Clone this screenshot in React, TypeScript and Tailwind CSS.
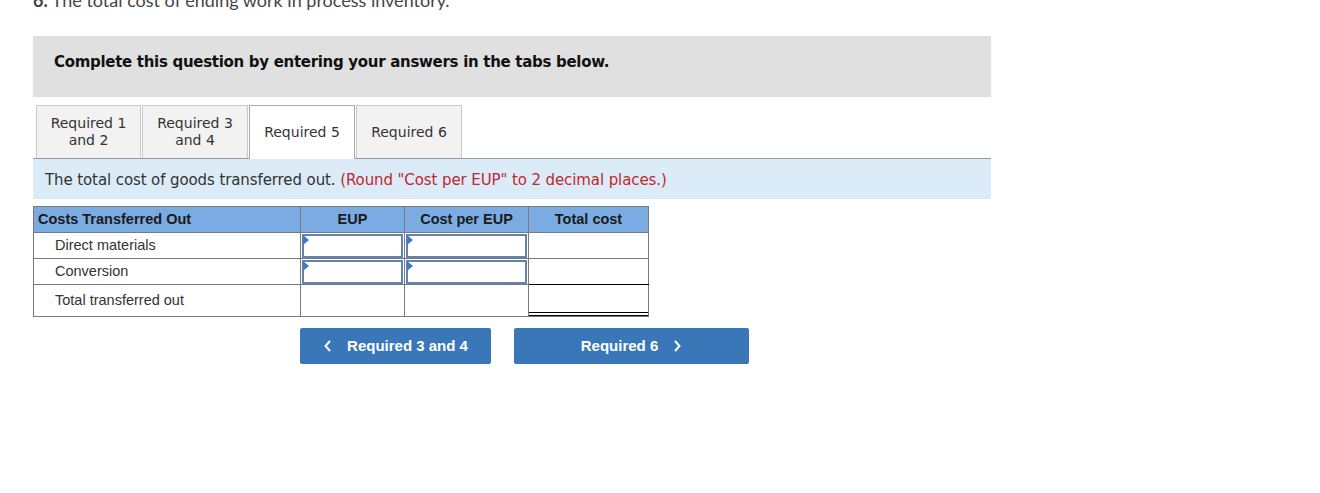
import React from "react";

const tabs = [
  { label: ["Required 1", "and 2"], active: false, w: "w-[105px]" },
  { label: ["Required 3", "and 4"], active: false, w: "w-[106px]" },
  { label: ["Required 5"], active: true, w: "w-[106px]" },
  { label: ["Required 6"], active: false, w: "w-[106px]" },
];

const InputCell = () => (
  <td className="border border-[#7a7a7a] p-0 h-[26px]">
    <div className="relative h-[24px] mx-[1px] border-2 border-[#6383aa] bg-white">
      <span className="absolute left-[-1px] top-[-1px] w-0 h-0 border-t-[5px] border-b-[5px] border-l-[6px] border-t-transparent border-b-transparent border-l-[#3b7bc8]" />
    </div>
  </td>
);

const App = () => {
  const rows = ["Direct materials", "Conversion"];

  return (
    <div className="w-[1320px] h-[493px] bg-white overflow-hidden">
      <p className="ml-[33px] -mt-[12px] text-[18px] leading-[24px] text-[#444] font-['Lato',sans-serif]">
        <span className="font-bold">6.</span> The total cost of ending work in process inventory.
      </p>

      <div className="ml-[33px] w-[958px] mt-[24px] font-['DejaVu_Sans','Verdana',sans-serif]">
        <div className="h-[61px] bg-[#e0e0e0] flex items-center pl-[21px] pb-[8px]">
          <span className="text-[15px] font-bold text-[#111] tracking-[-0.3px]">
            Complete this question by entering your answers in the tabs below.
          </span>
        </div>

        <div className="mt-[8px] flex gap-[1px] pl-[3px] border-b border-[#999] h-[54px]">
          {tabs.map((t) => (
            <div
              key={t.label.join(" ")}
              className={
                t.active
                  ? `${t.w} h-[54px] bg-white border border-b-0 border-[#a9a9a9] flex flex-col items-center justify-center text-[14px] leading-[17px] text-[#333] relative z-10`
                  : `${t.w} h-[53px] bg-[#f2f2f2] border border-b-0 border-[#c9c9c9] flex flex-col items-center justify-center text-[14px] leading-[17px] text-[#333]`
              }
            >
              {t.label.map((l) => (
                <span key={l}>{l}</span>
              ))}
            </div>
          ))}
        </div>

        <div className="h-[40px] bg-[#dbebf8] flex items-center pl-[12px] pt-[3px] text-[15px] text-[#333] tracking-[-0.1px]">
          The total cost of goods transferred out.&nbsp;
          <span className="text-[#c1272d]">(Round "Cost per EUP" to 2 decimal places.)</span>
        </div>

        <table className="mt-[7px] border-collapse font-['Liberation_Sans',Arial,sans-serif] text-[14.5px]">
          <thead>
            <tr className="bg-[#7aace3] h-[26px]">
              <th className="border border-[#7a7a7a] w-[267px] text-left pl-[4px] font-bold text-[#1a1a1a]">
                Costs Transferred Out
              </th>
              <th className="border border-[#7a7a7a] w-[104px] font-bold text-[#1a1a1a]">EUP</th>
              <th className="border border-[#7a7a7a] w-[124px] font-bold text-[#1a1a1a]">Cost per EUP</th>
              <th className="border border-[#7a7a7a] w-[120px] font-bold text-[#1a1a1a]">Total cost</th>
            </tr>
          </thead>
          <tbody>
            {rows.map((r, i) => (
              <tr key={r} className="h-[26px]">
                <td className="border border-[#7a7a7a] pl-[21px] text-[#333]">{r}</td>
                <InputCell />
                <InputCell />
                <td
                  className={
                    i === 1
                      ? "border border-[#7a7a7a] border-b-black"
                      : "border border-[#7a7a7a]"
                  }
                />
              </tr>
            ))}
            <tr className="h-[32px]">
              <td className="border border-[#7a7a7a] pl-[21px] text-[#333]">Total transferred out</td>
              <td className="border border-[#7a7a7a]" />
              <td className="border border-[#7a7a7a]" />
              <td className="border border-[#7a7a7a] border-t-black p-0 align-bottom">
                <div className="h-[4px] border-y border-black" />
              </td>
            </tr>
          </tbody>
        </table>

        <div className="mt-[11px] flex font-['Liberation_Sans',Arial,sans-serif] text-[15px] font-bold text-white">
          <button className="ml-[267px] w-[191px] h-[36px] rounded-[2px] bg-[#3a77b9] flex items-center justify-center gap-[14px]">
            <svg width="10" height="14" viewBox="0 0 10 14" fill="none">
              <path d="M7 2 L2.5 7 L7 12" stroke="white" strokeWidth="2" />
            </svg>
            <span>Required 3 and 4</span>
          </button>
          <button className="ml-[23px] w-[235px] h-[36px] rounded-[2px] bg-[#3a77b9] flex items-center justify-center gap-[14px]">
            <span>Required 6</span>
            <svg width="10" height="14" viewBox="0 0 10 14" fill="none">
              <path d="M3 2 L7.5 7 L3 12" stroke="white" strokeWidth="2" />
            </svg>
          </button>
        </div>
      </div>
    </div>
  );
};

export default App;
